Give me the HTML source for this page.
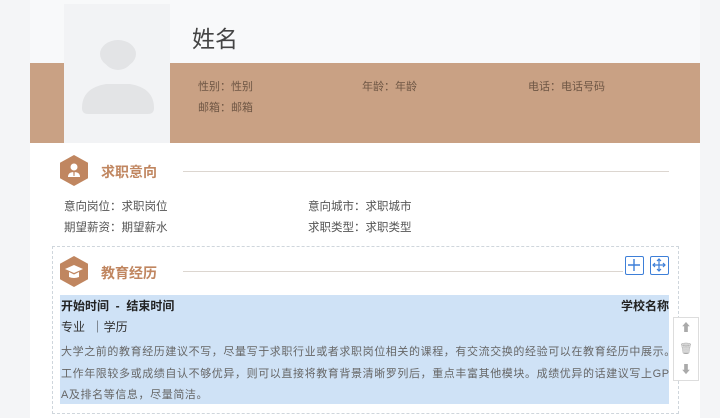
<!DOCTYPE html>
<html><head><meta charset="utf-8"><style>
*{margin:0;padding:0;box-sizing:border-box}
body{width:720px;height:418px;overflow:hidden;background:#f4f5f7;font-family:"Liberation Sans","Noto Sans CJK SC",sans-serif;position:relative}
.a{position:absolute;white-space:nowrap}
.page{position:absolute;left:30px;top:0;width:670px;height:418px;background:#fff}
.top{position:absolute;left:30px;top:0;width:670px;height:63px;background:#f8f9fa}
.band{position:absolute;left:30px;top:63px;width:670px;height:80px;background:#c9a184}
.photo{position:absolute;left:64px;top:4px;width:106px;height:139px;background:#f2f3f5}
.info{font-size:11px;color:#6e5644}
.title{font-size:14px;font-weight:bold;color:#c08660}
.line{position:absolute;height:1px;background:#dcd6d0}
.r{font-size:11.5px;color:#555}
.hex{position:absolute;width:28px;height:31px}
</style></head><body>
<div class="page"></div><div class="top"></div><div class="band"></div>
<div class="photo"><svg width="106" height="139" viewBox="0 0 106 139"><ellipse cx="54" cy="50" rx="18" ry="14" fill="#e3e4e6"/><ellipse cx="54" cy="52" rx="15" ry="14" fill="#e3e4e6"/><path d="M18 104 Q18 84 42 80 L66 80 Q90 84 90 104 Q90 110 84 110 L24 110 Q18 110 18 104Z" fill="#e3e4e6"/></svg></div>
<div class="a" style="left:192px;top:20px;font-size:23px;color:#444">姓名</div>
<div class="a info" style="left:198px;top:78px">性别：性别</div>
<div class="a info" style="left:362px;top:78px">年龄：年龄</div>
<div class="a info" style="left:528px;top:78px">电话：电话号码</div>
<div class="a info" style="left:198px;top:99px">邮箱：邮箱</div>

<svg class="hex" style="left:60px;top:155px" viewBox="0 0 28 31"><path d="M14 0 L28 7.75 L28 23.25 L14 31 L0 23.25 L0 7.75Z" fill="#c08660"/><circle cx="14" cy="12" r="3.5" fill="#fff"/><path d="M8 22 Q8 17 14 17 Q20 17 20 22Z" fill="#fff"/><path d="M13.3 17 L14.7 17 L14.5 21 L13.5 21Z" fill="#c08660"/></svg>
<div class="a title" style="left:101px;top:162px">求职意向</div>
<div class="line" style="left:183px;top:171px;width:486px"></div>
<div class="a r" style="left:64px;top:198px">意向岗位：求职岗位</div>
<div class="a r" style="left:308px;top:198px">意向城市：求职城市</div>
<div class="a r" style="left:64px;top:219px">期望薪资：期望薪水</div>
<div class="a r" style="left:308px;top:219px">求职类型：求职类型</div>

<div class="a" style="left:52px;top:246px;width:627px;height:168px;border:1px dashed #cfd6dc"></div>
<svg class="hex" style="left:60px;top:256px" viewBox="0 0 28 31"><path d="M14 0 L28 7.75 L28 23.25 L14 31 L0 23.25 L0 7.75Z" fill="#c08660"/><path d="M5 13 L14 9 L23 13 L14 17Z" fill="#fff"/><path d="M9 16 L9 21 Q14 23 19 21 L19 16 L14 18.5Z" fill="#fff"/></svg>
<div class="a title" style="left:101px;top:263px">教育经历</div>
<div class="line" style="left:183px;top:271px;width:440px"></div>
<div class="a" style="left:625px;top:256px;width:19px;height:19px;border:1.5px solid #3d7fd8;border-radius:2px;background:#fff"><svg width="16" height="16" viewBox="0 0 16 16"><path d="M8 2V14M2 8H14" stroke="#3d7fd8" stroke-width="1.4"/></svg></div>
<div class="a" style="left:650px;top:256px;width:19px;height:19px;border:1.5px solid #3d7fd8;border-radius:2px;background:#fff"><svg width="16" height="16" viewBox="0 0 16 16"><path d="M8 2V14M2 8H14M6 4L8 2L10 4M6 12L8 14L10 12M4 6L2 8L4 10M12 6L14 8L12 10" stroke="#3d7fd8" stroke-width="1.2" fill="none"/></svg></div>

<div class="a" style="left:60px;top:295px;width:609px;height:109px;background:#cfe2f6"></div>
<div class="a" style="left:61px;top:297px;font-size:12px;font-weight:bold;color:#222">开始时间 &nbsp;-&nbsp; 结束时间</div>
<div class="a" style="right:51px;top:297px;font-size:12px;font-weight:bold;color:#222">学校名称</div>
<div class="a" style="left:61px;top:318px;font-size:12px;color:#333">专业 &nbsp;｜学历</div>
<div class="a" style="left:61px;top:342px;font-size:11px;color:#666;line-height:21.5px;letter-spacing:0.6px">大学之前的教育经历建议不写，尽量写于求职行业或者求职岗位相关的课程，有交流交换的经验可以在教育经历中展示。<br>工作年限较多或成绩自认不够优异，则可以直接将教育背景清晰罗列后，重点丰富其他模块。成绩优异的话建议写上GP<br>A及排名等信息，尽量简洁。</div>

<div class="a" style="left:673px;top:317px;width:26px;height:64px;border:1px solid #ddd;background:#fff;color:#aaa;font-size:11px;text-align:center;line-height:21px">⬆<br>🗑<br>⬇</div>
</body></html>
